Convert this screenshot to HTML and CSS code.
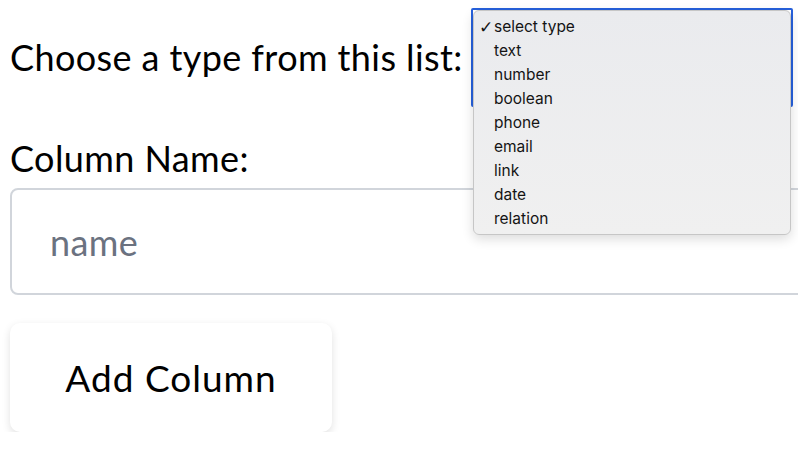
FILE: index.html
```html
<!DOCTYPE html>
<html lang="en">
<head>
<meta charset="utf-8">
<title>Add Column</title>
<link rel="stylesheet" href="styles.css">
</head>
<body>
<div class="page">
  <div class="type-row">
    <label class="type-label">Choose a type from this list:</label>
    <div class="select-box">
      <ul class="menu">
        <li class="item checked"><span class="check">✓</span>select type</li>
        <li class="item"><span class="check"></span>text</li>
        <li class="item"><span class="check"></span>number</li>
        <li class="item"><span class="check"></span>boolean</li>
        <li class="item"><span class="check"></span>phone</li>
        <li class="item"><span class="check"></span>email</li>
        <li class="item"><span class="check"></span>link</li>
        <li class="item"><span class="check"></span>date</li>
        <li class="item"><span class="check"></span>relation</li>
      </ul>
    </div>
  </div>
  <label class="name-label" for="colname">Column Name:</label>
  <input class="name-input" id="colname" type="text" placeholder="name">
  <button class="add-btn" type="button">Add Column</button>
</div>
</body>
</html>
```
FILE: styles.css
```css
html, body {
  margin: 0;
  padding: 0;
  background: #ffffff;
  overflow: hidden;
}

.page {
  padding: 8px 10px 0 10px;
  font-family: "Lato", "Noto Sans", sans-serif;
  font-size: 36px;
  letter-spacing: 0.4px;
  color: #000000;
}

.type-row {
  display: flex;
  align-items: center;
  height: 99px;
}

.type-label {
  line-height: 1.2;
  width: 461px;
  flex: none;
}

.select-box {
  position: relative;
  flex: none;
  width: 322px;
  height: 99px;
  box-sizing: border-box;
  border: 2px solid #2660dc;
  border-radius: 2px;
  background: #ffffff;
}

.menu {
  position: absolute;
  left: 0;
  top: 0;
  width: 318px;
  height: 225px;
  box-sizing: border-box;
  margin: 0;
  padding: 4px 0 0 0;
  list-style: none;
  background: linear-gradient(#eaebee, #f0f0f0);
  border: 1px solid #c6c6c6;
  border-radius: 6px;
  box-shadow: 0 4px 12px rgba(0, 0, 0, 0.14);
  font-family: "Inter", "Liberation Sans", sans-serif;
  font-size: 15.5px;
  letter-spacing: 0;
  color: #141414;
  z-index: 2;
}

.item {
  display: flex;
  align-items: center;
  height: 24px;
  line-height: 24px;
}

.check {
  display: inline-block;
  box-sizing: border-box;
  width: 20px;
  padding-left: 5px;
  flex: none;
  font-family: "DejaVu Sans", sans-serif;
  font-size: 17px;
}

.name-label {
  display: block;
  margin-top: 30px;
  line-height: 1.2;
}

.name-input {
  display: block;
  margin-top: 8px;
  width: 820px;
  height: 107px;
  box-sizing: border-box;
  padding: 0 38px;
  border: 2px solid #d1d5db;
  border-radius: 8px;
  font-family: inherit;
  font-size: 36px;
  letter-spacing: 0.4px;
  color: #000000;
  background: #ffffff;
  outline: none;
}

.name-input::placeholder {
  color: #6b7280;
}

.add-btn {
  display: block;
  margin-top: 28px;
  width: 322px;
  height: 109px;
  border: none;
  border-radius: 10px;
  background: #ffffff;
  box-shadow: 0 3px 9px rgba(0, 0, 0, 0.12);
  font-family: inherit;
  font-size: 37px;
  letter-spacing: 1px;
  color: #000000;
  cursor: pointer;
}
```
